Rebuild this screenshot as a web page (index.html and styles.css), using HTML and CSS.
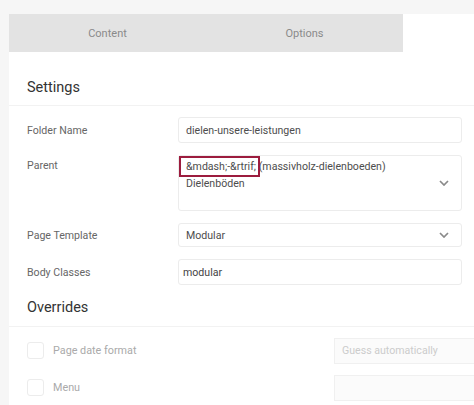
FILE: index.html
```html
<!DOCTYPE html>
<html>
<head>
<meta charset="utf-8">
<link rel="stylesheet" href="styles.css">
</head>
<body>
<div class="page">
  <div class="panel">
    <div class="tabs">
      <div class="tab">Content</div>
      <div class="tab">Options</div>
    </div>
    <div class="section">
      <h2 class="section-title">Settings</h2>
      <div class="form">
        <div class="row">
          <label class="label">Folder Name</label>
          <div class="input">dielen-unsere-leistungen</div>
        </div>
        <div class="row row-top">
          <label class="label label-top">Parent</label>
          <div class="textarea">
            <div class="ta-text"><span class="mark">&amp;mdash;-&amp;rtrif;</span> (massivholz-dielenboeden)<br>Dielenböden</div>
            <svg class="chev" viewBox="0 0 10 6" width="10" height="6"><path d="M1 1 L5 5 L9 1" fill="none" stroke="#8a8a8a" stroke-width="1.7"/></svg>
          </div>
        </div>
        <div class="row">
          <label class="label">Page Template</label>
          <div class="input select">Modular
            <svg class="chev" viewBox="0 0 10 6" width="10" height="6"><path d="M1 1 L5 5 L9 1" fill="none" stroke="#8a8a8a" stroke-width="1.7"/></svg>
          </div>
        </div>
        <div class="row">
          <label class="label">Body Classes</label>
          <div class="input input-strong">modular</div>
        </div>
      </div>
      <h2 class="section-title title-2">Overrides</h2>
      <div class="overrides">
        <div class="orow">
          <span class="check"></span>
          <span class="olabel">Page date format</span>
          <div class="oinput">Guess automatically</div>
        </div>
        <div class="orow">
          <span class="check"></span>
          <span class="olabel">Menu</span>
          <div class="oinput"></div>
        </div>
      </div>
    </div>
  </div>
</div>
</body>
</html>
```
FILE: styles.css
```css
html, body {
  margin: 0;
  padding: 0;
  background: #f6f6f6;
  font-family: Roboto, "Liberation Sans", sans-serif;
  overflow: hidden;
}
.page {
  padding: 14px 0 0 9px;
}
.panel {
  background: #fff;
  height: 400px;
}
.tabs {
  display: flex;
  width: 394px;
  height: 38px;
  background: #e3e3e3;
}
.tab {
  flex: 1;
  display: flex;
  align-items: center;
  justify-content: center;
  font-size: 11px;
  color: #8a8a8a;
}
.section-title {
  margin: 0;
  font-weight: 400;
  font-size: 14.5px;
  color: #333;
  padding: 26px 18px 7px;
  line-height: 20px;
  border-bottom: 1px solid #f2f2f2;
}
.form {
  padding: 11px 12px 0 18px;
  display: flex;
  flex-direction: column;
  gap: 12px;
}
.row {
  display: flex;
  align-items: center;
}
.row-top {
  align-items: flex-start;
}
.label {
  width: 151px;
  flex: none;
  font-size: 10.6px;
  color: #666;
}
.label-top {
  padding-top: 2px;
  line-height: 17px;
}
.input {
  flex: 1;
  height: 24px;
  border: 1px solid #ececec;
  border-radius: 3px;
  display: flex;
  align-items: center;
  padding: 0 7px;
  font-size: 10.6px;
  color: #4d4d4d;
  position: relative;
}
.select {
  height: 22px;
}
.input-strong {
  color: #444;
  padding-left: 4px;
}
.textarea {
  flex: 1;
  height: 54px;
  border: 1px solid #ececec;
  border-radius: 3px;
  position: relative;
  font-size: 10.6px;
  color: #4d4d4d;
}
.ta-text {
  padding: 2px 7px;
  line-height: 17px;
}
.mark {
  position: relative;
}
.mark::after {
  content: "";
  position: absolute;
  left: -7px;
  right: -4px;
  top: -4px;
  bottom: -4px;
  border: 2px solid #9c1c3e;
}
.chev {
  position: absolute;
  right: 12px;
  top: 50%;
  margin-top: -3px;
}
.title-2 {
  padding-top: 13px;
  padding-bottom: 8px;
}
.overrides {
  padding: 11px 0 0 18px;
  display: flex;
  flex-direction: column;
  gap: 12px;
}
.orow {
  display: flex;
  align-items: center;
  height: 25px;
}
.check {
  width: 15px;
  height: 15px;
  border: 1px solid #ececec;
  border-radius: 3px;
  flex: none;
}
.olabel {
  margin-left: 9px;
  width: 281px;
  font-size: 10.8px;
  color: #aaa;
}
.oinput {
  flex: 1;
  height: 24px;
  border: 1px solid #f0f0f0;
  border-right: none;
  background: #fbfbfb;
  display: flex;
  align-items: center;
  padding-left: 7px;
  font-size: 10.6px;
  color: #ccc;
}
```
